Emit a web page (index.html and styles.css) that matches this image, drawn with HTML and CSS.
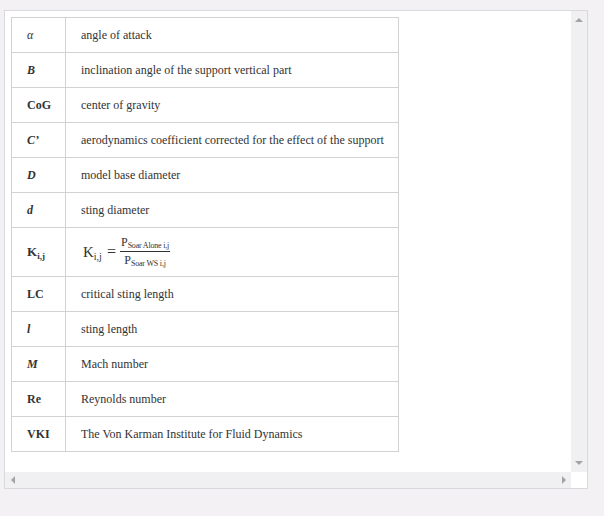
FILE: index.html
```html
<!DOCTYPE html>
<html>
<head>
<meta charset="utf-8">
<link rel="stylesheet" href="styles.css">
</head>
<body>
<div class="panel">
  <div class="content">
    <table class="glossary">
      <tr><td class="sym"><i>α</i></td><td>angle of attack</td></tr>
      <tr><td class="sym"><b><i>B</i></b></td><td>inclination angle of the support vertical part</td></tr>
      <tr><td class="sym"><b>CoG</b></td><td>center of gravity</td></tr>
      <tr><td class="sym"><b><i>C’</i></b></td><td>aerodynamics coefficient corrected for the effect of the support</td></tr>
      <tr><td class="sym"><b><i>D</i></b></td><td>model base diameter</td></tr>
      <tr><td class="sym"><b><i>d</i></b></td><td>sting diameter</td></tr>
      <tr class="tall">
        <td class="sym"><b class="kij">K<sub>i,j</sub></b></td>
        <td>
          <span class="math">
            <span class="mk">K<sub>i,j</sub></span>
            <span class="eq">=</span>
            <span class="frac">
              <span class="num">P<sub>Soar Alone i,j</sub></span>
              <span class="den">P<sub>Soar WS i,j</sub></span>
            </span>
          </span>
        </td>
      </tr>
      <tr><td class="sym"><b>LC</b></td><td>critical sting length</td></tr>
      <tr><td class="sym"><b><i>l</i></b></td><td>sting length</td></tr>
      <tr><td class="sym"><b><i>M</i></b></td><td>Mach number</td></tr>
      <tr><td class="sym"><b>Re</b></td><td>Reynolds number</td></tr>
      <tr><td class="sym"><b>VKI</b></td><td>The Von Karman Institute for Fluid Dynamics</td></tr>
    </table>
  </div>
  <div class="vbar">
    <span class="arrow up"></span>
    <span class="arrow down"></span>
  </div>
  <div class="hbar">
    <span class="arrow left"></span>
    <span class="arrow right"></span>
  </div>
  <div class="corner"></div>
</div>
</body>
</html>
```

FILE: styles.css
```css
html, body {
  margin: 0;
  padding: 0;
  background: #f3f1f4;
}
body {
  font-family: "Liberation Serif", "Times New Roman", serif;
  color: #333;
}
.panel {
  margin: 10px 0 0 4px;
  width: 582px;
  height: 477px;
  border: 1px solid #d9d8dc;
  background: #fff;
  display: grid;
  grid-template-columns: 566px 16px;
  grid-template-rows: 461px 16px;
}
.content {
  padding: 6px;
  overflow: hidden;
}
.glossary {
  border-collapse: collapse;
  width: 388px;
  font-size: 12px;
  line-height: 18px;
}
.glossary td {
  border: 1px solid #d2d2d2;
  padding: 8px 14px 8px 15px;
  vertical-align: middle;
  white-space: nowrap;
}
.glossary td.sym {
  width: 24px;
  font-size: 12px;
}
.glossary tr.tall td {
  padding-top: 7px;
  padding-bottom: 8px;
  height: 33px;
}
.kij {
  font-size: 13px;
}
.kij sub {
  font-size: 9px;
  vertical-align: -3px;
  line-height: 0;
}
.math {
  display: inline-flex;
  align-items: center;
  padding-left: 2px;
  font-size: 15px;
}
.mk sub {
  font-size: 10px;
  vertical-align: -3px;
  line-height: 0;
}
.eq {
  margin: 0 4px 0 5px;
  font-size: 16px;
}
.frac {
  display: inline-flex;
  flex-direction: column;
  align-items: center;
  font-size: 12px;
  line-height: 15px;
}
.frac sub {
  font-size: 8px;
  letter-spacing: -0.2px;
  vertical-align: -2px;
  line-height: 0;
}
.num {
  border-bottom: 1px solid #333;
  padding: 0 1px 1px;
}
.den {
  padding-top: 1px;
}
.vbar {
  background: #f0eff2;
  display: flex;
  flex-direction: column;
  justify-content: space-between;
  align-items: center;
  padding: 7px 0 7px;
}
.hbar {
  background: #f0eff2;
  display: flex;
  justify-content: space-between;
  align-items: center;
  padding: 0 5px 0 6px;
}
.corner {
  background: #fff;
}
.arrow {
  display: block;
  width: 0;
  height: 0;
}
.arrow.up {
  border-left: 4px solid transparent;
  border-right: 4px solid transparent;
  border-bottom: 4px solid #a3a3a3;
}
.arrow.down {
  border-left: 4px solid transparent;
  border-right: 4px solid transparent;
  border-top: 4px solid #a3a3a3;
}
.arrow.left {
  border-top: 4px solid transparent;
  border-bottom: 4px solid transparent;
  border-right: 4px solid #a3a3a3;
}
.arrow.right {
  border-top: 4px solid transparent;
  border-bottom: 4px solid transparent;
  border-left: 4px solid #a3a3a3;
}
```
